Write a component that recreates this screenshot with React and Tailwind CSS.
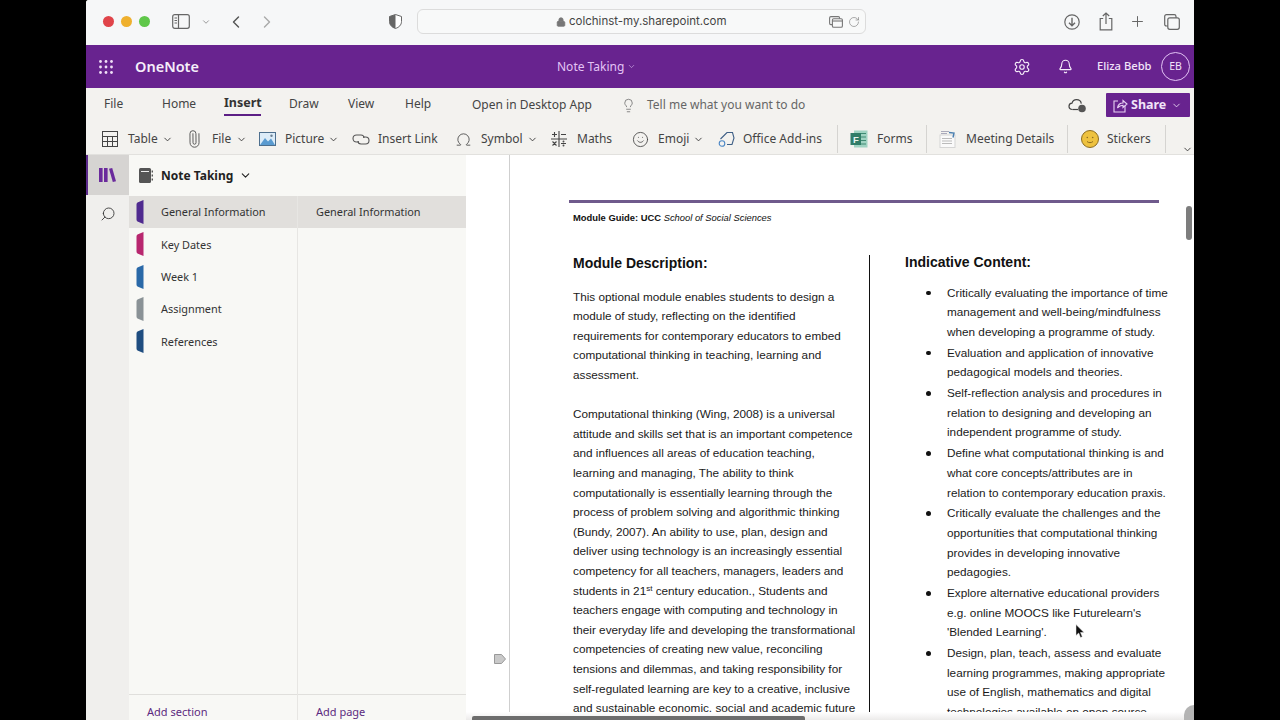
import React from "react";
import { ChevronLeft, ChevronRight, ChevronDown, Plus, Settings, Bell, Lightbulb, Paperclip, Omega, Smile, Search, Lock, RotateCw } from "lucide-react";

const UI = "font-['Noto_Sans',sans-serif]";

const leftA = [
  "This optional module enables students to design a",
  "module of study, reflecting on the identified",
  "requirements for contemporary educators to embed",
  "computational thinking in teaching, learning and",
  "assessment.",
];
const leftB = [
  "Computational thinking (Wing, 2008) is a universal",
  "attitude and skills set that is an important competence",
  "and influences all areas of education teaching,",
  "learning and managing, The ability to think",
  "computationally is essentially learning through the",
  "process of problem solving and algorithmic thinking",
  "(Bundy, 2007). An ability to use, plan, design and",
  "deliver using technology is an increasingly essential",
  "competency for all teachers, managers, leaders and",
];
const leftC = [
  "teachers engage with computing and technology in",
  "their everyday life and developing the transformational",
  "competencies of creating new value, reconciling",
  "tensions and dilemmas, and taking responsibility for",
  "self-regulated learning are key to a creative, inclusive",
  "and sustainable economic, social and academic future",
];
const bullets = [
  ["Critically evaluating the importance of time", "management and well-being/mindfulness", "when developing a programme of study."],
  ["Evaluation and application of innovative", "pedagogical models and theories."],
  ["Self-reflection analysis and procedures in", "relation to designing and developing an", "independent programme of study."],
  ["Define what computational thinking is and", "what core concepts/attributes are in", "relation to contemporary education praxis."],
  ["Critically evaluate the challenges and the", "opportunities that computational thinking", "provides in developing innovative", "pedagogies."],
  ["Explore alternative educational providers", "e.g. online MOOCS like Futurelearn's", "'Blended Learning'."],
  ["Design, plan, teach, assess and evaluate", "learning programmes, making appropriate", "use of English, mathematics and digital", "technologies available on open source"],
];
const sections = [
  ["General Information", "#4f2a8f"],
  ["Key Dates", "#b8276f"],
  ["Week 1", "#2a69a8"],
  ["Assignment", "#8a9296"],
  ["References", "#1f4d80"],
];

function Chev({ className = "" }) {
  return <ChevronDown size={13} strokeWidth={2} className={"text-[#3a3a3a] " + className} />;
}
function Tab({ color }) {
  return (
    <svg width="8" height="24" viewBox="0 0 8 24" className="ml-[7px] shrink-0">
      <path d="M7.5 0V24L2 21.8Q0.5 21.3 0.5 19.5V4.5Q0.5 2.8 2 2.2Z" fill={color} />
    </svg>
  );
}

function TitleBar() {
  return (
    <div className="h-[45px] shrink-0 bg-[#f6f7f8] flex items-center pb-[2px] text-[#555]">
      <span className="ml-[17px] w-[11px] h-[11px] rounded-full bg-[#e0444a]" />
      <span className="ml-[7px] w-[11px] h-[11px] rounded-full bg-[#efb02e]" />
      <span className="ml-[7px] w-[11px] h-[11px] rounded-full bg-[#5fc74a]" />
      <svg width="18" height="15" viewBox="0 0 18 15" className="ml-[22px]" fill="none" stroke="#666" strokeWidth="1.2">
        <rect x="0.7" y="0.7" width="16.6" height="13.6" rx="2" />
        <path d="M6.5 1v13" />
        <path d="M2.5 4h2.5M2.5 6.5h2.5M2.5 9h2.5" strokeWidth="1" />
      </svg>
      <ChevronDown size={10} strokeWidth={2} className="ml-[11px] text-[#888]" />
      <ChevronLeft size={20} strokeWidth={1.7} className="ml-[15px] text-[#555]" />
      <ChevronRight size={20} strokeWidth={1.7} className="ml-[11px] text-[#aaa]" />
      <svg width="13" height="15" viewBox="0 0 13 15" className="ml-[112px]">
        <path d="M6.5 0.5L12.5 2.5V7.5C12.5 11 10 13.3 6.5 14.5C3 13.3 0.5 11 0.5 7.5V2.5Z" fill="#fff" stroke="#666" />
        <path d="M6.5 0.5L0.5 2.5V7.5C0.5 11 3 13.3 6.5 14.5Z" fill="#666" />
      </svg>
      <div className="ml-[15px] w-[449px] h-[25px] rounded-[6px] border border-[#dcdcdc] bg-[#f8f9f9] flex items-center">
        <Lock size={10} strokeWidth={2.2} className="ml-[138px] text-[#777] fill-[#777]" />
        <span className="ml-[3px] w-[159px] whitespace-nowrap text-[11.5px] text-[#444] font-['Inter',sans-serif]">colchinst-my.sharepoint.com</span>
        <svg width="14" height="12" viewBox="0 0 14 12" className="ml-[101px]" fill="none" stroke="#777" strokeWidth="1.1">
          <rect x="0.6" y="0.6" width="10" height="8" rx="1.3" />
          <rect x="3.4" y="2.8" width="10" height="8.5" rx="1.3" fill="#f8f9f9" />
          <path d="M3.4 5h10" />
        </svg>
        <RotateCw size={12} strokeWidth={1.4} className="ml-[5px] text-[#888]" />
      </div>
      <svg width="16" height="16" viewBox="0 0 16 16" className="ml-[198px]" fill="none" stroke="#666" strokeWidth="1.2">
        <circle cx="8" cy="8" r="7.2" />
        <path d="M8 3.8V11.5M5 8.8L8 11.7L11 8.8" strokeWidth="1.4" />
      </svg>
      <svg width="14" height="19" viewBox="0 0 14 19" className="ml-[19px]" fill="none" stroke="#666" strokeWidth="1.2">
        <path d="M4.2 6.5H1.2V17.8H12.8V6.5H9.8" />
        <path d="M7 12V1M3.8 4L7 1L10.2 4" />
      </svg>
      <Plus size={17} strokeWidth={1.4} className="ml-[16px] text-[#666]" />
      <svg width="16" height="16" viewBox="0 0 16 16" className="ml-[18px]" fill="none" stroke="#666" strokeWidth="1.2">
        <rect x="3.8" y="3.8" width="11.5" height="11.5" rx="2" />
        <path d="M3.8 12H2.5C1.4 12 0.7 11.3 0.7 10.2V2.5C0.7 1.4 1.4 0.7 2.5 0.7H10.2C11.3 0.7 12 1.4 12 2.5V3.8" />
      </svg>
    </div>
  );
}

function PurpleBar() {
  return (
    <div className={"h-[43px] shrink-0 bg-[#68238f] flex items-center text-white " + UI}>
      <svg width="14" height="14" viewBox="0 0 14 14" className="ml-[13px]" fill="#f0dff7">
        {[1.5, 7, 12.5].flatMap((y) => [1.5, 7, 12.5].map((x) => <circle key={x + "-" + y} cx={x} cy={y} r="1.4" />))}
      </svg>
      <span className="ml-[22px] w-[70px] whitespace-nowrap text-[14.5px] font-semibold text-[#f6eefa]">OneNote</span>
      <span className="ml-[352px] w-[68px] whitespace-nowrap text-[12px] text-[#e3c3f5]">Note Taking</span>
      <ChevronDown size={9} strokeWidth={1.5} className="ml-[2px] text-[#e3c3f5]" />
      <Settings size={18} strokeWidth={1.5} className="ml-[377px] text-[#f6eefa]" />
      <Bell size={15} strokeWidth={1.8} className="ml-[27px] text-[#f6eefa]" />
      <span className="ml-[24px] w-[56px] whitespace-nowrap text-[11.2px] font-medium text-[#f2e4f9]">Eliza Bebb</span>
      <span className="ml-[8px] w-[29px] h-[29px] rounded-full border border-[#e3c3f5] flex items-center justify-center text-[10.5px] text-[#f2e4f9]">EB</span>
    </div>
  );
}

function Ribbon() {
  const t = "whitespace-nowrap text-[12px] text-[#444] ";
  return (
    <div className={"h-[67px] shrink-0 bg-[#f3f2ef] border-b border-[#e2e1de] " + UI}>
      <div className="h-[33px] flex items-center">
        <span className={t + "ml-[18px] w-[22px] mb-[2px]"}>File</span>
        <span className={t + "ml-[36px] w-[36px] mb-[2px]"}>Home</span>
        <span className="ml-[26px] w-[37px] mb-[2px] relative whitespace-nowrap text-[12.5px] font-bold text-[#333]">
          Insert
          <span className="absolute left-0 right-0 top-[20px] h-[2px] bg-[#5c1f85]" />
        </span>
        <span className={t + "ml-[28px] w-[31px] mb-[2px]"}>Draw</span>
        <span className={t + "ml-[28px] w-[29px] mb-[2px]"}>View</span>
        <span className={t + "ml-[28px] w-[28px] mb-[2px]"}>Help</span>
        <span className={t + "ml-[39px] w-[120px] mt-[1px]"}>Open in Desktop App</span>
        <Lightbulb size={15} strokeWidth={1.2} className="ml-[29px] mt-[1px] text-[#666]" />
        <span className="ml-[11px] w-[158px] mt-[1px] whitespace-nowrap text-[12px] text-[#666]">Tell me what you want to do</span>
        <svg width="19" height="15" viewBox="0 0 19 15" className="ml-[263px] mt-[1px]" fill="none">
          <path d="M4.5 11.5C2.5 11.5 1 10.2 1 8.3C1 6.6 2.3 5.3 4 5.2C4.6 3 6.4 1.7 8.5 1.7C11 1.7 13 3.4 13.3 5.7" stroke="#444" strokeWidth="1.2" />
          <path d="M4.5 11.5H10" stroke="#444" strokeWidth="1.2" />
          <circle cx="14" cy="10.5" r="3.8" fill="#555" />
        </svg>
        <div className="ml-[19px] w-[84px] h-[24px] mt-[1px] bg-[#68238f] rounded-[1px] flex items-center text-[#f2e4f9]">
          <svg width="15" height="15" viewBox="0 0 15 15" className="ml-[7px]" fill="none" stroke="#e8d3f3" strokeWidth="1.1">
            <path d="M5 3H1V14H12V8" />
            <path d="M4.5 10C5 6.5 7.5 5 10 5V2.5L14 6L10 9.5V7.2C8 7.2 6 8 4.5 10Z" />
          </svg>
          <span className="ml-[3px] whitespace-nowrap text-[12.5px] font-bold">Share</span>
          <ChevronDown size={11} strokeWidth={1.8} className="ml-[5px]" />
        </div>
      </div>
      <div className="h-[33px] pt-[3px] flex items-center">
        <svg width="16" height="16" viewBox="0 0 16 16" className="ml-[16px] shrink-0" fill="none" stroke="#444" strokeWidth="1">
          <rect x="0.5" y="0.5" width="15" height="15" />
          <path d="M0.5 5.5H15.5M0.5 10.5H15.5M5.5 5.5V15.5M10.5 5.5V15.5" />
        </svg>
        <span className={t + "ml-[10px] w-[32px]"}>Table</span>
        <Chev className="ml-[2px] w-[11px] shrink-0" />
        <Paperclip size={18} strokeWidth={1.2} className="ml-[12px] shrink-0 text-[#555] -rotate-45" />
        <span className={t + "ml-[9px] w-[22px]"}>File</span>
        <Chev className="ml-[2px] w-[11px] shrink-0" />
        <svg width="17" height="14" viewBox="0 0 17 14" className="ml-[12px] shrink-0">
          <rect x="0.5" y="0.5" width="16" height="13" fill="#dcecf8" stroke="#4d6f8e" />
          <path d="M1 13L6 6L9 9.5L12 6.5L16 13Z" fill="#5a9bd0" />
          <circle cx="12.5" cy="3.8" r="1.2" fill="#6b7f91" />
        </svg>
        <span className={t + "ml-[9px] w-[40px]"}>Picture</span>
        <Chev className="ml-[3px] w-[11px] shrink-0" />
        <svg width="18" height="11" viewBox="0 0 18 11" className="ml-[13px] shrink-0" fill="none" stroke="#555" strokeWidth="1.1">
          <path d="M7 8H4.5C2.5 8 1 6.5 1 4.5S2.5 1 4.5 1H9C11 1 12 2.5 12 4" />
          <path d="M11 3H13.5C15.5 3 17 4.5 17 6.5S15.5 10 13.5 10H9C7 10 6 8.5 6 7" />
        </svg>
        <span className={t + "ml-[8px] w-[58px]"}>Insert Link</span>
        <Omega size={17} strokeWidth={1.2} className="ml-[19px] shrink-0 text-[#444]" />
        <span className={t + "ml-[9px] w-[42px]"}>Symbol</span>
        <Chev className="ml-[4px] w-[11px] shrink-0" />
        <svg width="16" height="16" viewBox="0 0 16 16" className="ml-[13px] shrink-0" fill="none" stroke="#444" strokeWidth="1.1">
          <path d="M8 0V16M0 8H16M1 3.5H6M3.5 1V6M10 3.5H15M1.5 10.5L5.5 14.5M5.5 10.5L1.5 14.5M10 12.5H15" />
          <circle cx="12.5" cy="10.5" r="0.4" /><circle cx="12.5" cy="14.5" r="0.4" />
        </svg>
        <span className={t + "ml-[10px] w-[36px]"}>Maths</span>
        <Smile size={17} strokeWidth={1.2} className="ml-[19px] shrink-0 text-[#444]" />
        <span className={t + "ml-[9px] w-[31px]"}>Emoji</span>
        <Chev className="ml-[4px] w-[11px] shrink-0" />
        <svg width="17" height="16" viewBox="0 0 17 16" className="ml-[14px] shrink-0" fill="none" strokeWidth="1.1">
          <path d="M2.5 8L9 1.5H14.5L16 7L14 13.5H9" stroke="#3e5f86" />
          <circle cx="4" cy="12.5" r="2.8" stroke="#4a86c5" />
        </svg>
        <span className={t + "ml-[8px] w-[81px]"}>Office Add-ins</span>
        <span className="ml-[13px] w-px h-[28px] shrink-0 bg-[#d5d4d1]" />
        <svg width="18" height="18" viewBox="0 0 18 18" className="ml-[12px] shrink-0">
          <path d="M4 0.5H17.5V17.5H4Z" fill="#9fd3c2" />
          <path d="M11 3.5H16M11 7H16M11 10.5H16M11 14H16" stroke="#3f8a73" strokeWidth="1" />
          <path d="M0.5 3H11V15H0.5Z" fill="#2f7d68" />
          <text x="3" y="12.5" fontSize="9.5" fontWeight="700" fill="#e8f5f0" fontFamily="Liberation Sans, sans-serif">F</text>
        </svg>
        <span className={t + "ml-[9px] w-[35px]"}>Forms</span>
        <span className="ml-[14px] w-px h-[28px] shrink-0 bg-[#d5d4d1]" />
        <svg width="18" height="18" viewBox="0 0 18 18" className="ml-[12px] shrink-0">
          <rect x="1" y="5" width="15" height="12.5" fill="#fafafa" stroke="#d5d5d5" />
          <path d="M3 8.5H13M3 11H13M3 13.5H13" stroke="#bbb" />
          <path d="M2 1.5H10M2 3.5H8" stroke="#aab" />
          <path d="M10 2.5L15 3L14 7.5" fill="none" stroke="#4a7fb0" strokeWidth="1.4" />
        </svg>
        <span className={t + "ml-[9px] w-[88px]"}>Meeting Details</span>
        <span className="ml-[13px] w-px h-[28px] shrink-0 bg-[#d5d4d1]" />
        <svg width="18" height="18" viewBox="0 0 18 18" className="ml-[13px] shrink-0">
          <circle cx="9" cy="9" r="8.5" fill="#eec23f" stroke="#8d6d1f" />
          <circle cx="6.3" cy="7.5" r="0.8" fill="#8d6d1f" />
          <circle cx="11.7" cy="7.5" r="0.8" fill="#8d6d1f" />
          <path d="M6 11.5C7.5 13 10.5 13 12 11.5" fill="none" stroke="#8d6d1f" />
        </svg>
        <span className={t + "ml-[8px] w-[44px]"}>Stickers</span>
        <span className="ml-[14px] w-px h-[28px] shrink-0 bg-[#d5d4d1]" />
        <Chev className="ml-[16px] mt-[20px] w-[11px] shrink-0" />
      </div>
    </div>
  );
}

function Sidebar() {
  const row = "h-[32.3px] flex items-center text-[10.9px] text-[#333] whitespace-nowrap ";
  return (
    <div className={"w-[337px] shrink-0 bg-[#f8f8f5] flex flex-col " + UI}>
      <div className="h-[40px] shrink-0 flex items-center">
        <svg width="15" height="15" viewBox="0 0 15 15" className="ml-[10px]">
          <rect x="0" y="0" width="12" height="15" rx="1.5" fill="#555" />
          <path d="M2 3.5H10" stroke="#eee" strokeWidth="1.2" />
          <path d="M13.3 2.5V4.5M13.3 6.5V8.5M13.3 10.5V12.5" stroke="#555" strokeWidth="1.4" />
        </svg>
        <span className="ml-[7px] w-[73px] mt-[1px] whitespace-nowrap text-[12px] font-bold text-[#222]">Note Taking</span>
        <ChevronDown size={13} strokeWidth={2} className="ml-[5px] text-[#222]" />
      </div>
      <div className="flex-1 flex min-h-0 pt-px">
        <div className="w-[168px] flex flex-col">
          <div className="flex-1">
            {sections.map(([name, color], i) => (
              <div key={name} className={row + (i === 0 ? "bg-[#e1dfdc]" : "")}>
                <Tab color={color} />
                <span className="ml-[17px] mt-[1px]">{name}</span>
              </div>
            ))}
          </div>
          <div className="h-[26px] border-t border-[#e0dfdc] pl-[18px] pt-[8px] text-[11px] leading-[18px] text-[#5c2a80]">Add section</div>
        </div>
        <div className="w-[169px] border-l border-[#e7e6e3] flex flex-col">
          <div className="flex-1">
            <div className={row + "bg-[#e1dfdc] pl-[18px]"}><span className="mt-[1px]">General Information</span></div>
          </div>
          <div className="h-[26px] border-t border-[#e0dfdc] pl-[18px] pt-[8px] text-[11px] leading-[18px] text-[#5c2a80]">Add page</div>
        </div>
      </div>
    </div>
  );
}

function Line({ children }) {
  return <div className="h-[19.6px] leading-[19.6px] whitespace-nowrap">{children}</div>;
}

function Page() {
  return (
    <div className="relative flex-1 min-w-0 bg-white overflow-hidden">
      <div className="h-[557px] overflow-hidden ml-[43px] border-l border-[#cfcfcf] pl-[59px] pt-[45px] font-['Liberation_Sans',sans-serif] text-[#1a1a1a]">
        <div className="w-[590px] h-[2.5px] bg-[#6f5a8c]" />
        <div className="ml-[4px] mt-[8px] h-[14px] leading-[14px] text-[9.4px] text-[#111] whitespace-nowrap">
          <b>Module Guide: UCC</b> <i>School of Social Sciences</i>
        </div>
        <div className="mt-[30px] flex text-[11.75px]">
          <div className="w-[297px] ml-[4px] shrink-0 border-r border-[#111] h-[460px]">
            <div className="h-[16px] leading-[16px] text-[14px] font-bold text-[#111] whitespace-nowrap">Module Description:</div>
            <div className="mt-[16.2px]">
              {leftA.map((l) => <Line key={l}>{l}</Line>)}
              <Line>{"\u00a0"}</Line>
              {leftB.map((l) => <Line key={l}>{l}</Line>)}
              <Line>students in 21<sup className="text-[8px] leading-none">st</sup> century education., Students and</Line>
              {leftC.map((l) => <Line key={l}>{l}</Line>)}
            </div>
          </div>
          <div className="ml-[35px] w-[270px] shrink-0 -mt-px">
            <div className="h-[16px] leading-[16px] text-[14px] font-bold text-[#111] whitespace-nowrap">Indicative Content:</div>
            <div className="mt-[13.2px]">
              {bullets.map((b) => (
                <div key={b[0]} className="flex mb-[1.3px]">
                  <span className="ml-[21px] mt-[8px] w-[4.5px] h-[4.5px] rounded-full bg-[#111] shrink-0" />
                  <div className="ml-[16.5px]">{b.map((l) => <Line key={l}>{l}</Line>)}</div>
                </div>
              ))}
            </div>
          </div>
        </div>
      </div>
      <svg width="12" height="10" viewBox="0 0 12 10" className="absolute left-[28px] top-[499px]">
        <path d="M0.5 0.5H7.5L11.5 5L7.5 9.5H0.5Z" fill="#c9c9c9" stroke="#999" />
      </svg>
      <div className="absolute left-0 right-0 bottom-0 h-[8px] bg-gradient-to-b from-white to-[#ecebea]" />
      <div className="absolute left-[6px] bottom-0 w-[333px] h-[4px] rounded-t-[2px] bg-[#6d6d6d]" />
      <div className="absolute right-[2px] top-[51px] w-[6px] h-[34px] rounded-full bg-[#7d7d7d]" />
      <div className="absolute right-0 bottom-0 w-[10px] h-[15px] rounded-tl-[10px] bg-[#b4b4b4]" />
      <svg width="10" height="15" viewBox="0 0 10 15" className="absolute left-[609px] top-[469px]">
        <path d="M1 0.5V11.5L3.7 9L5.5 13.5L7.3 12.7L5.5 8.5H9Z" fill="#111" stroke="#eee" strokeWidth="0.5" />
      </svg>
    </div>
  );
}

export default function App() {
  return (
    <div className="w-[1280px] h-[720px] bg-black overflow-hidden flex justify-center">
      <div className="w-[1108px] h-full flex flex-col bg-white rounded-tl-[3px] overflow-hidden">
        <TitleBar />
        <PurpleBar />
        <Ribbon />
        <div className="flex-1 min-h-0 flex">
          <div className="w-[43px] shrink-0 bg-[#f0efed] flex flex-col">
            <div className="h-[40px] bg-[#d6d4d2] border-l-2 border-[#5c2a8c] flex items-center justify-center pr-[2px]">
              <svg width="17" height="14" viewBox="0 0 17 14" fill="#6a2a9c">
                <rect x="0" y="0" width="3.6" height="14" />
                <rect x="5" y="0" width="3.6" height="14" />
                <path d="M10 0.8L13.2 0L17 13.2L13.8 14Z" />
              </svg>
            </div>
            <div className="h-[38px] flex items-center justify-center">
              <Search size={16} strokeWidth={1.3} className="text-[#333] -scale-x-100" />
            </div>
          </div>
          <Sidebar />
          <Page />
        </div>
      </div>
    </div>
  );
}
